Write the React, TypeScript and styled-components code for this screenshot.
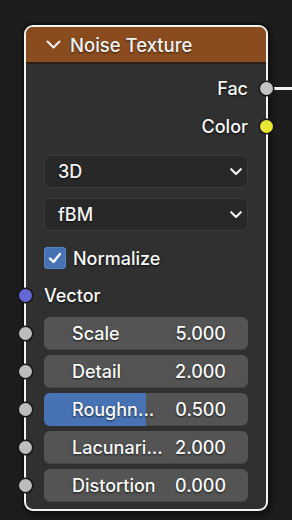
import React from "react";
import styled, { createGlobalStyle } from "styled-components";

const Global = createGlobalStyle`
  html, body { margin: 0; padding: 0; background: #1d1d1d; }
  body { width: 292px; height: 520px; overflow: hidden; font-family: Inter, "Noto Sans", sans-serif; }
`;

const Canvas = styled.div`
  position: relative;
  width: 292px;
  height: 520px;
  overflow: hidden;
  padding: 25px 0 0 24px;
  box-sizing: border-box;
`;

const Node = styled.div`
  width: 244px;
  box-sizing: border-box;
  border: 2px solid #f4f4f4;
  border-radius: 9px;
  background: #303030;
  box-shadow: 0 0 0 2px #121212, 2px 4px 8px rgba(0, 0, 0, 0.6);
  display: flex;
  flex-direction: column;
`;

const Header = styled.div`
  height: 35px;
  background: #8a4c1f;
  border-radius: 7px 7px 0 0;
  border-bottom: 2px solid #2a2018;
  display: flex;
  align-items: center;
  padding-left: 20px;
  gap: 9px;
  color: #f2f2f2;
  font-size: 18.5px;
  font-weight: 500;
  text-shadow: 0 1px 2px rgba(0, 0, 0, 0.6);
`;

const Body = styled.div`
  display: flex;
  flex-direction: column;
  padding: 5px 18px 7px 18px;
`;

const SocketRow = styled.div<{ $out?: boolean; $h?: number; $mt?: number }>`
  position: relative;
  height: ${(p) => p.$h ?? 38}px;
  margin-top: ${(p) => p.$mt ?? 0}px;
  display: flex;
  align-items: center;
  justify-content: ${(p) => (p.$out ? "flex-end" : "flex-start")};
  color: #fafafa;
  font-size: 18px;
  font-weight: 500;
  text-shadow: 0 1px 2px rgba(0, 0, 0, 0.8);
`;

const Socket = styled.span<{ $color: string; $side: "left" | "right" }>`
  position: absolute;
  top: 50%;
  ${(p) => p.$side}: -25px;
  width: 13px;
  height: 13px;
  margin-top: -6.5px;
  border-radius: 50%;
  background: ${(p) => p.$color};
  box-shadow: 0 0 0 1.5px #181818;
  z-index: 2;
`;

const Link = styled.span`
  position: absolute;
  top: 50%;
  left: calc(100% + 24px);
  width: 20px;
  height: 3px;
  margin-top: -1.5px;
  background: #f4f4f4;
  z-index: 1;
`;

const Select = styled.div<{ $mt: number }>`
  margin-top: ${(p) => p.$mt}px;
  height: 33px;
  box-sizing: border-box;
  border: 1px solid #3b3b3b;
  border-radius: 6px;
  background: #282828;
  display: flex;
  align-items: center;
  justify-content: space-between;
  padding: 0 5px 0 13px;
  color: #f4f4f4;
  font-size: 18px;
  font-weight: 500;
  text-shadow: 0 1px 2px rgba(0, 0, 0, 0.8);
`;

const CheckRow = styled.div`
  margin-top: 16px;
  height: 22px;
  display: flex;
  align-items: center;
  gap: 7px;
  color: #fafafa;
  font-size: 18px;
  font-weight: 500;
  text-shadow: 0 1px 2px rgba(0, 0, 0, 0.8);
`;

const Box = styled.span`
  width: 22px;
  height: 22px;
  border-radius: 4px;
  background: #4772b3;
  box-shadow: inset 0 0 0 1px #5a86c8;
  display: flex;
  align-items: center;
  justify-content: center;
`;

const Sliders = styled.div`
  margin-top: 6px;
  display: flex;
  flex-direction: column;
  gap: 5px;
`;

const Slider = styled.div`
  position: relative;
  height: 33px;
  border-radius: 6px;
  background: #545454;
  box-shadow: inset 0 -1px 0 rgba(0, 0, 0, 0.15);
  display: flex;
  align-items: center;
  justify-content: space-between;
  padding: 0 22px 0 28px;
  color: #fafafa;
  font-size: 18px;
  font-weight: 500;
  text-shadow: 0 1px 2px rgba(0, 0, 0, 0.7);
`;

const Fill = styled.span`
  position: absolute;
  left: 0;
  top: 0;
  bottom: 0;
  background: #4772b3;
  border-radius: 6px 0 0 6px;
`;

const SliderText = styled.span`
  position: relative;
  z-index: 1;
`;

const Chevron = ({ size = 15, stroke = 2 }: { size?: number; stroke?: number }) => (
  <svg width={size} height={size * 0.6} viewBox="0 0 15 9" fill="none">
    <path d="M1.5 1.5 L7.5 7.5 L13.5 1.5" stroke="#f2f2f2" strokeWidth={stroke} strokeLinecap="round" strokeLinejoin="round" />
  </svg>
);

const sliders = [
  { label: "Scale", value: "5.000", fill: 0 },
  { label: "Detail", value: "2.000", fill: 0 },
  { label: "Roughn...", value: "0.500", fill: 0.5 },
  { label: "Lacunari...", value: "2.000", fill: 0 },
  { label: "Distortion", value: "0.000", fill: 0 },
];

export default function App() {
  return (
    <>
      <Global />
      <Canvas>
        <Node>
          <Header>
            <Chevron size={15} stroke={2} />
            <span>Noise Texture</span>
          </Header>
          <Body>
            <SocketRow $out>
              Fac
              <Socket $side="right" $color="#c2c2c2" />
              <Link />
            </SocketRow>
            <SocketRow $out>
              Color
              <Socket $side="right" $color="#e7e736" />
            </SocketRow>
            <Select $mt={10}>
              <span>3D</span>
              <Chevron size={12} stroke={2.6} />
            </Select>
            <Select $mt={10}>
              <span>fBM</span>
              <Chevron size={12} stroke={2.6} />
            </Select>
            <CheckRow>
              <Box>
                <svg width="16" height="16" viewBox="0 0 16 16" fill="none">
                  <path d="M3 8.5 L6.5 12 L13 4" stroke="#fff" strokeWidth="2.4" strokeLinecap="round" strokeLinejoin="round" />
                </svg>
              </Box>
              <span>Normalize</span>
            </CheckRow>
            <SocketRow $h={32} $mt={10}>
              Vector
              <Socket $side="left" $color="#6767d6" />
            </SocketRow>
            <Sliders>
              {sliders.map((s) => (
                <Slider key={s.label}>
                  {s.fill > 0 && <Fill style={{ width: `${s.fill * 100}%` }} />}
                  <Socket $side="left" $color="#bdbdbd" />
                  <SliderText>{s.label}</SliderText>
                  <SliderText>{s.value}</SliderText>
                </Slider>
              ))}
            </Sliders>
          </Body>
        </Node>
      </Canvas>
    </>
  );
}
